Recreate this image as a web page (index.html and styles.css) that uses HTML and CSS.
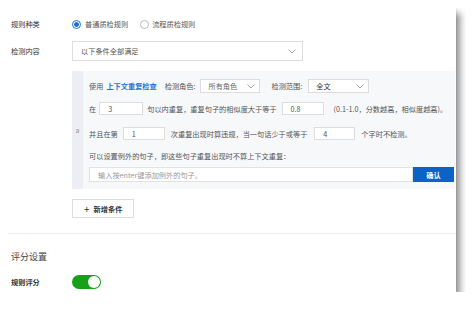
FILE: index.html
```html
<!DOCTYPE html>
<html lang="zh">
<head>
<meta charset="utf-8">
<link rel="stylesheet" href="styles.css">
</head>
<body>
<div class="card">
  <div class="row row-type">
    <span class="label">规则种类</span>
    <div class="radios">
      <span class="radio"><span class="dot on"></span><span>普通质检规则</span></span>
      <span class="radio r2"><span class="dot"></span><span>流程质检规则</span></span>
    </div>
  </div>
  <div class="row row-content">
    <span class="label">检测内容</span>
    <div class="select select-wide"><span>以下条件全部满足</span>
      <svg class="chev" width="8" height="5" viewBox="0 0 8 5"><path d="M0.5 0.5 L4 4 L7.5 0.5" fill="none" stroke="#999" stroke-width="0.9"/></svg>
    </div>
  </div>
  <div class="row row-panel">
    <span class="label"></span>
    <div class="panel">
      <div class="strip">a</div>
      <div class="pbody">
        <div class="prow prow1">
          <span>使用</span>
          <span class="link">上下文重复检查</span>
          <span class="plabel">检测角色:</span>
          <div class="select select-sm s-role"><span>所有角色</span>
            <svg class="chev" width="8" height="5" viewBox="0 0 8 5"><path d="M0.5 0.5 L4 4 L7.5 0.5" fill="none" stroke="#999" stroke-width="0.9"/></svg>
          </div>
          <span class="plabel pl2">检测范围:</span>
          <div class="select select-sm s-range"><span class="dark">全文</span>
            <svg class="chev" width="8" height="5" viewBox="0 0 8 5"><path d="M0.5 0.5 L4 4 L7.5 0.5" fill="none" stroke="#999" stroke-width="0.9"/></svg>
          </div>
        </div>
        <div class="prow prow2">
          <span>在</span>
          <span class="inp i-a">3</span>
          <span>句以内重复，重复句子的相似度大于等于</span>
          <span class="inp i-b">0.8</span>
          <span class="hint">(0.1-1.0，分数越高，相似度越高)。</span>
        </div>
        <div class="prow prow3">
          <span>并且在第</span>
          <span class="inp i-c">1</span>
          <span>次重复出现时算违规，当一句话少于或等于</span>
          <span class="inp i-d">4</span>
          <span>个字时不检测。</span>
        </div>
        <div class="prow prow4">可以设置例外的句子，即这些句子重复出现时不算上下文重复：</div>
        <div class="prow prow5">
          <span class="big-inp">输入按enter键添加例外的句子。</span>
          <span class="confirm">确认</span>
        </div>
      </div>
    </div>
  </div>
  <div class="row row-add">
    <span class="label"></span>
    <span class="add-btn"><span class="plus">+</span>新增条件</span>
  </div>
  <div class="divider"></div>
  <div class="section-title">评分设置</div>
  <div class="row row-score">
    <span class="label">规则评分</span>
    <span class="toggle"><span class="knob"></span></span>
  </div>
</div>
</body>
</html>
```

FILE: styles.css
```css
* { box-sizing: border-box; }
body {
  margin: 8px;
  background: #fff;
  font-family: "Noto Sans CJK SC", "Noto Sans", sans-serif;
  font-size: 7.2px;
  color: #555;
}
.card {
  width: 448px;
  height: 284px;
  background: #fff;
  padding: 6px 1px 0 3px;
  box-shadow: 4px 5px 7px rgba(0,0,0,0.45), 0 0 2px rgba(0,0,0,0.12);
}
.row { display: flex; align-items: center; }
.label { width: 61px; flex: none; color: #333; }
.row-type { height: 20px; }
.radios { display: flex; align-items: center; }
.radio { display: flex; align-items: center; gap: 4px; color: #555; }
.radio.r2 { margin-left: 12px; gap: 3px; }
.dot {
  width: 9px; height: 9px; border-radius: 50%;
  border: 1px solid #bbb; background: #fff;
}
.dot.on {
  border-color: #1b6fd6;
  background: radial-gradient(circle, #1b6fd6 0 2.1px, #fff 2.5px);
}
.row-content { margin-top: 7px; height: 20px; }
.select {
  display: flex; align-items: center; justify-content: space-between;
  background: #fff; border: 1px solid #ddd;
}
.select-wide { width: 231px; height: 20px; padding: 0 6px 0 8px; color: #555; }
.row-panel { margin-top: 10px; align-items: stretch; }
.panel { flex: 1; display: flex; height: 118px; }
.strip {
  width: 11px; flex: none; background: #eceef3;
  display: flex; align-items: center; justify-content: center;
  color: #999; font-size: 7px;
}
.pbody { flex: 1; background: #f7f8fa; padding: 8px 1px 7px 6px; }
.prow { display: flex; align-items: center; white-space: nowrap; }
.prow1 { height: 14px; }
.link { color: #1b6fd6; font-weight: 700; margin-left: 3px; }
.plabel { margin-left: 8px; margin-right: 5px; }
.plabel.pl2 { margin-left: 11px; margin-right: 6px; }
.select-sm { height: 14px; padding: 0 4px 0 7px; }
.s-role { width: 60px; color: #666; }
.s-range { width: 61px; }
.dark { color: #333; }
.prow2 { margin-top: 9px; height: 13px; }
.prow3 { margin-top: 12px; height: 13px; }
.inp {
  height: 13px; background: #fff; border: 1px solid #ddd;
  display: flex; align-items: center; padding-left: 8px; color: #555;
}
.i-a { width: 44px; margin: 0 4px 0 3px; }
.i-b { width: 42px; margin: 0 10px 0 5px; }
.i-c { width: 42px; margin: 0 6px 0 5px; }
.i-d { width: 41px; margin: 0 6px 0 7px; }
.prow4 { margin-top: 10px; height: 12px; color: #555; }
.prow5 { margin-top: 5px; height: 15px; }
.big-inp {
  flex: 1; height: 15px; background: #fff; border: 1px solid #e2e2e2;
  display: flex; align-items: center; padding-left: 8px; color: #999;
}
.confirm {
  width: 41px; height: 15px; background: #0c63c7; color: #fff;
  font-weight: 700; display: flex; align-items: center; justify-content: center;
}
.row-add { margin-top: 10px; }
.add-btn {
  width: 62px; height: 19px; background: #fff; border: 1px solid #ddd;
  display: flex; align-items: center; padding-left: 11px; color: #333; font-weight: 700;
}
.plus { font-size: 10px; font-weight: 400; margin-right: 4px; color: #333; }
.divider { margin: 15px -1px 0 -3px; height: 1px; background: #eee; }
.section-title { margin-top: 15px; height: 16px; line-height: 16px; font-size: 9px; color: #444; }
.row-score { margin-top: 10px; height: 14px; }
.row-score .label { font-weight: 700; color: #333; }
.toggle {
  width: 29px; height: 14px; border-radius: 7px; background: #18a018;
  display: flex; align-items: center; justify-content: flex-end; padding-right: 1px;
}
.knob { width: 12px; height: 12px; border-radius: 50%; background: #fff; }
```
